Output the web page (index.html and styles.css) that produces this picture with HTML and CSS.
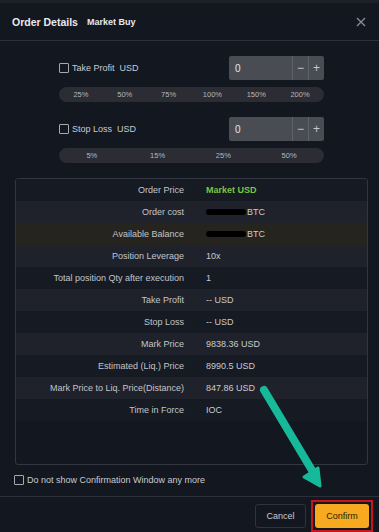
FILE: index.html
```html
<!DOCTYPE html>
<html lang="en">
<head>
  <meta charset="UTF-8">
  <title>Order Details</title>
  <link rel="stylesheet" href="styles.css">
</head>
<body>

<div class="modal">
  <header class="modal-head">
    <h1>Order Details</h1>
    <span class="subtitle">Market Buy</span>
    <span class="close">
      <svg width="10" height="10" viewBox="0 0 10 10"><path d="M1 1L9 9M9 1L1 9" stroke="#8a8d96" stroke-width="1.3"/></svg>
    </span>
  </header>

  <div class="modal-body">
    <!-- Take profit -->
    <div class="tp-row">
      <label class="check"><span class="box"></span>Take Profit <span class="unit">USD</span></label>
      <div class="stepper"><span class="val">0</span><span class="btn">&minus;</span><span class="btn">+</span></div>
    </div>
    <div class="pct-bar">
      <span>25%</span><span>50%</span><span>75%</span><span>100%</span><span>150%</span><span>200%</span>
    </div>

    <!-- Stop loss -->
    <div class="tp-row">
      <label class="check"><span class="box"></span>Stop Loss <span class="unit">USD</span></label>
      <div class="stepper"><span class="val">0</span><span class="btn">&minus;</span><span class="btn">+</span></div>
    </div>
    <div class="pct-bar">
      <span>5%</span><span>15%</span><span>25%</span><span>50%</span>
    </div>

    <div class="details">
      <div class="row dark"><span class="k">Order Price</span><span class="v green">Market USD</span></div>
      <div class="row"><span class="k">Order cost</span><span class="v"><span class="mask"></span>BTC</span></div>
      <div class="row hl"><span class="k">Available Balance</span><span class="v"><span class="mask"></span>BTC</span></div>
      <div class="row"><span class="k">Position Leverage</span><span class="v">10x</span></div>
      <div class="row dark"><span class="k">Total position Qty after execution</span><span class="v">1</span></div>
      <div class="row"><span class="k">Take Profit</span><span class="v">-- USD</span></div>
      <div class="row dark"><span class="k">Stop Loss</span><span class="v">-- USD</span></div>
      <div class="row"><span class="k">Mark Price</span><span class="v">9838.36 USD</span></div>
      <div class="row dark"><span class="k">Estimated (Liq.) Price</span><span class="v">8990.5 USD</span></div>
      <div class="row"><span class="k">Mark Price to Liq. Price(Distance)</span><span class="v">847.86 USD</span></div>
      <div class="row dark"><span class="k">Time in Force</span><span class="v">IOC</span></div>
    </div>

    <label class="check confirm-check"><span class="box"></span>Do not show Confirmation Window any more</label>
  </div>

  <footer class="modal-foot">
    <button class="btn-cancel">Cancel</button>
    <span class="highlight"><button class="btn-confirm">Confirm</button></span>
  </footer>
</div>

<!-- annotation arrow -->
<svg class="arrow" width="379" height="532" viewBox="0 0 379 532">
  <path d="M264 390 L313 472" stroke="#16b99a" stroke-width="8" stroke-linecap="round" fill="none"/>
  <path d="M304 477 L320 486 L318 468 Z" fill="#16b99a" stroke="#16b99a" stroke-width="3" stroke-linejoin="round"/>
</svg>

</body>
</html>
```

FILE: styles.css
```css
* { box-sizing: border-box; margin: 0; padding: 0; }
body {
  font-family: "Liberation Sans", Arial, sans-serif;
  background: #1d2027; color: #c9cbd0;
  width: 379px; height: 532px; overflow: hidden;
  padding-top: 3px;
}

.modal { background: #131720; height: 529px; display: flex; flex-direction: column; }

.modal-head {
  height: 38px; display: flex; align-items: center;
  padding: 0 11px 0 12px; border-bottom: 1px solid #2c3039;
}
.modal-head h1 { font-size: 10.5px; font-weight: bold; color: #e8e9ec; }
.subtitle { font-size: 9px; font-weight: bold; color: #e8e9ec; margin-left: 9px; }
.close { margin-left: auto; display: flex; margin-right: 2px; }

.modal-body { padding: 0 11px 0 14px; flex: 1; }

.tp-row {
  display: flex; align-items: center; justify-content: space-between;
  margin: 15px 44px 0 45px; height: 24px;
}
.check { display: flex; align-items: center; font-size: 9px; color: #c9cbd0; }
.box {
  width: 10px; height: 10px; border: 1px solid #a5a8ae; border-radius: 1px;
  margin-right: 3px; display: inline-block;
}
.unit { margin-left: 5px; }

.stepper {
  width: 95px; height: 24px; background: #4a4c54; border-radius: 2px;
  display: flex; font-size: 10px; color: #e6e6e6;
}
.stepper .val { flex: 1; padding-left: 6px; display: flex; align-items: center; }
.stepper .btn {
  width: 16px; display: flex; align-items: center; justify-content: center;
  border-left: 1px solid #5f626a; color: #c7c8cc; font-size: 12px;
}

.pct-bar {
  margin: 7px 44px 0 45px; height: 15px; background: #2b2c34; border-radius: 8px;
  display: flex; align-items: center; font-size: 7.5px; color: #b6b8bd;
  padding-right: 2px;
}
.pct-bar span { flex: 1; text-align: center; }

.details {
  margin: 15px 0 0 1px; border: 1px solid #33363f; border-radius: 3px;
  height: 287px; overflow: hidden;
}
.row { display: flex; height: 22px; align-items: center; background: #1f222a; font-size: 9px; }
.row.dark { background: #161a23; }
.row.hl { background: #26241f; }
.row .k { width: 168px; text-align: right; color: #c3c5ca; }
.row .v { margin-left: 22px; color: #c9cbd0; display: flex; align-items: center; }
.row .v.green { color: #7cc443; font-weight: bold; }
.mask {
  display: inline-block; width: 40px; height: 6px; background: #000;
  border-radius: 3px; margin-right: 1px;
}

.confirm-check { margin-top: 9px; height: 12px; }

.modal-foot {
  border-top: 1px solid #2c3039; height: 36px;
  display: flex; align-items: center; justify-content: flex-end; padding-right: 6px;
}
.btn-cancel {
  font-family: inherit; font-size: 9px; color: #c9cbd0;
  background: #131720; border: 1px solid #30333b; border-radius: 3px;
  width: 51px; height: 24px; margin-right: 5px; margin-top: 2px;
}
.highlight { border: 2px solid #c8141c; padding: 2px; display: flex; margin-top: 2px; }
.btn-confirm {
  font-family: inherit; font-size: 9px; color: #2b2208;
  background: #f7a91f; border: none; border-radius: 3px;
  width: 54px; height: 24px;
}

.arrow { position: absolute; left: 0; top: 0; pointer-events: none; }
```
